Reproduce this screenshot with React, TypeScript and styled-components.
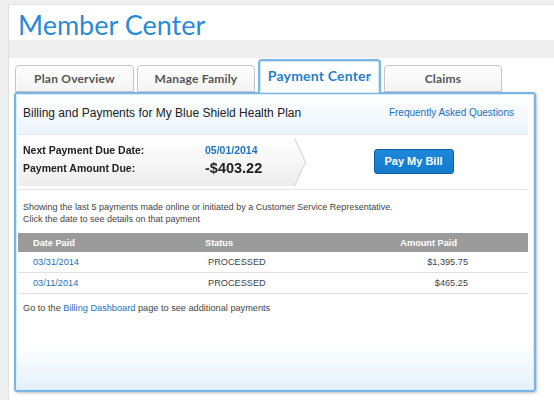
import React from "react";
import styled, { createGlobalStyle } from "styled-components";

const GlobalStyle = createGlobalStyle`
  html, body {
    margin: 0;
    padding: 0;
    background: #efefef;
    font-family: "Liberation Sans", Arial, sans-serif;
  }
`;

const Page = styled.div`
  margin: 4px 0 0 8px;
  min-height: 396px;
  background: #fff;
  border-left: 1px solid #e0e0e0;
  border-top: 1px solid #e4e4e4;
  box-sizing: border-box;
`;

const Title = styled.h1`
  margin: 0;
  padding-left: 9px;
  height: 35px;
  line-height: 40px;
  font-family: Lato, "Open Sans", sans-serif;
  font-weight: 400;
  font-size: 27px;
  color: #2a8bd5;
`;

const Band = styled.div`
  height: 18px;
  background: #efefef;
`;

const TabRow = styled.div`
  display: flex;
  align-items: flex-end;
  gap: 3px;
  height: 34px;
  padding-left: 6px;
  position: relative;
  z-index: 2;
`;

const Tab = styled.div<{ $active?: boolean; $w: number }>`
  box-sizing: border-box;
  width: ${(p) => p.$w}px;
  height: ${(p) => (p.$active ? 34 : 27)}px;
  margin-bottom: ${(p) => (p.$active ? -1 : 0)}px;
  display: flex;
  align-items: center;
  justify-content: center;
  padding-bottom: ${(p) => (p.$active ? 3 : 0)}px;
  font-family: Lato, "Open Sans", sans-serif;
  font-weight: 700;
  font-size: ${(p) => (p.$active ? 14 : 12)}px;
  letter-spacing: 0.2px;
  color: ${(p) => (p.$active ? "#1f80cc" : "#555")};
  background: ${(p) =>
    p.$active ? "#fff" : "linear-gradient(#ffffff, #f3f3f3)"};
  border: ${(p) => (p.$active ? "2px solid #79b6e4" : "1px solid #c4c4c4")};
  border-bottom: ${(p) => (p.$active ? "none" : "1px solid #c4c4c4")};
  border-radius: 4px 4px 0 0;
  box-shadow: ${(p) =>
    p.$active ? "inset 0 0 0 1px #d4e9f8" : "inset 1px 1px 0 #fff"};
`;

const Panel = styled.div`
  position: relative;
  z-index: 1;
  box-sizing: border-box;
  margin-left: 5px;
  width: 522px;
  height: 300px;
  padding: 1px 6px 0 2px;
  border: 2px solid #79b6e4;
  border-radius: 3px;
  box-shadow: inset 0 0 0 1px #d8ecfa, 1px 1px 3px rgba(0, 0, 0, 0.25);
  background: linear-gradient(#ffffff 84%, #e3f1fb 100%);
`;

const PanelHead = styled.div`
  display: flex;
  align-items: center;
  justify-content: space-between;
  height: 40px;
  padding: 0 14px 4px 5px;
  box-sizing: border-box;
  background: linear-gradient(#ffffff, #eaf4fc);
  border-bottom: 1px solid #e4e8ec;
`;

const PanelTitle = styled.span`
  font-size: 12px;
  color: #222;
`;

const Link = styled.a`
  color: #1e6fbd;
  text-decoration: none;
  cursor: pointer;
`;

const FaqLink = styled(Link)`
  font-size: 10px;
`;

const Summary = styled.div`
  display: flex;
  height: 54px;
  border-bottom: 1px solid #e3e3e3;
`;

const ChevronWrap = styled.div`
  filter: drop-shadow(1.5px 0 0 #cfcfcf);
  padding-top: 3px;
`;

const Chevron = styled.div`
  width: 287px;
  height: 48px;
  box-sizing: border-box;
  padding: 3px 0 0 5px;
  background: linear-gradient(#ffffff, #ededed);
  clip-path: polygon(0 0, 276px 0, 287px 50%, 276px 100%, 0 100%);
`;

const SumRow = styled.div`
  display: flex;
  align-items: center;
  height: 18px;
`;

const SumLabel = styled.span`
  width: 182px;
  font-size: 10.5px;
  font-weight: 700;
  color: #222;
`;

const SumValue = styled.span<{ $big?: boolean }>`
  font-weight: 700;
  font-size: ${(p) => (p.$big ? 14.5 : 10.5)}px;
  color: ${(p) => (p.$big ? "#222" : "#1e73c2")};
`;

const PayArea = styled.div`
  flex: 1;
  display: flex;
  align-items: center;
  justify-content: center;
  padding: 0 6px 2px 0;
`;

const PayButton = styled.button`
  width: 80px;
  height: 25px;
  border: 1px solid #0f5fa8;
  border-radius: 3px;
  background: linear-gradient(#2088da, #117acd);
  color: #fff;
  font-family: "Liberation Sans", Arial, sans-serif;
  font-weight: 700;
  font-size: 11px;
  cursor: pointer;
`;

const Info = styled.p`
  margin: 0;
  padding: 12px 5px 8px;
  font-size: 9px;
  line-height: 11.5px;
  color: #444;
`;

const TRow = styled.div<{ $head?: boolean }>`
  display: grid;
  grid-template-columns: 187px 1fr 140px;
  align-items: center;
  height: ${(p) => (p.$head ? 19 : 20)}px;
  background: ${(p) => (p.$head ? "#9b9b9b" : "transparent")};
  border-bottom: ${(p) => (p.$head ? "none" : "1px solid #e0e0e0")};
  font-size: 9.2px;
  font-weight: ${(p) => (p.$head ? 700 : 400)};
  color: ${(p) => (p.$head ? "#fff" : "#444")};
`;

const Cell = styled.span<{ $pl?: number; $right?: boolean; $pr?: number }>`
  padding-left: ${(p) => p.$pl ?? 0}px;
  padding-right: ${(p) => p.$pr ?? 0}px;
  text-align: ${(p) => (p.$right ? "right" : "left")};
`;

const Footer = styled.p`
  margin: 0;
  padding: 9px 5px;
  font-size: 9.2px;
  color: #444;
`;

const payments = [
  { date: "03/31/2014", status: "PROCESSED", amount: "$1,395.75" },
  { date: "03/11/2014", status: "PROCESSED", amount: "$465.25" },
];

export default function App() {
  return (
    <>
      <GlobalStyle />
      <Page>
        <Title>Member Center</Title>
        <Band />
        <TabRow>
          <Tab $w={119}>Plan Overview</Tab>
          <Tab $w={118}>Manage Family</Tab>
          <Tab $w={123} $active>
            Payment Center
          </Tab>
          <Tab $w={118}>Claims</Tab>
        </TabRow>
        <Panel>
          <PanelHead>
            <PanelTitle>Billing and Payments for My Blue Shield Health Plan</PanelTitle>
            <FaqLink>Frequently Asked Questions</FaqLink>
          </PanelHead>
          <Summary>
            <ChevronWrap>
              <Chevron>
                <SumRow>
                  <SumLabel>Next Payment Due Date:</SumLabel>
                  <SumValue>05/01/2014</SumValue>
                </SumRow>
                <SumRow>
                  <SumLabel>Payment Amount Due:</SumLabel>
                  <SumValue $big>-$403.22</SumValue>
                </SumRow>
              </Chevron>
            </ChevronWrap>
            <PayArea>
              <PayButton>Pay My Bill</PayButton>
            </PayArea>
          </Summary>
          <Info>
            Showing the last 5 payments made online or initiated by a Customer Service Representative.
            <br />
            Click the date to see details on that payment
          </Info>
          <TRow $head>
            <Cell $pl={15}>Date Paid</Cell>
            <Cell>Status</Cell>
            <Cell $right $pr={71}>Amount Paid</Cell>
          </TRow>
          {payments.map((p) => (
            <TRow key={p.date}>
              <Cell $pl={15}>
                <Link>{p.date}</Link>
              </Cell>
              <Cell $pl={3}>{p.status}</Cell>
              <Cell $right $pr={60}>{p.amount}</Cell>
            </TRow>
          ))}
          <Footer>
            Go to the <Link>Billing Dashboard</Link> page to see additional payments
          </Footer>
        </Panel>
      </Page>
    </>
  );
}
